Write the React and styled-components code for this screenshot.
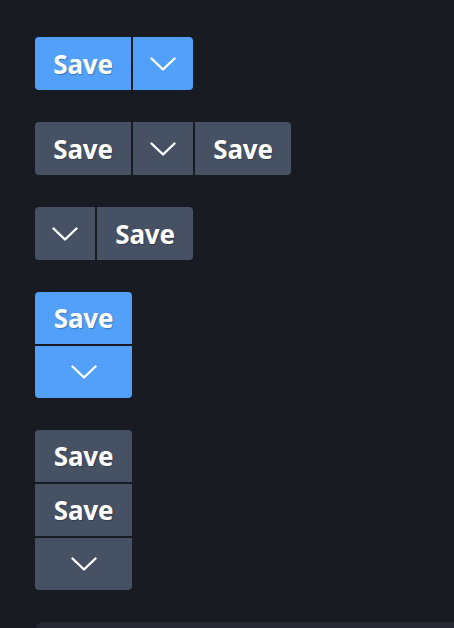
import React from "react";
import styled, { createGlobalStyle } from "styled-components";

const GlobalStyle = createGlobalStyle`
  html, body {
    margin: 0;
    padding: 0;
    background: #191b22;
    overflow: hidden;
  }
`;

const Page = styled.div`
  display: flex;
  flex-direction: column;
  align-items: flex-start;
  gap: 32px;
  padding: 37px 0 0 35px;
  height: 628px;
  box-sizing: border-box;
  overflow: hidden;
  font-family: "Noto Sans", "Open Sans", sans-serif;
`;

const Group = styled.div`
  display: inline-flex;
  flex-shrink: 0;
  flex-direction: ${(p) => (p.$vertical ? "column" : "row")};
  gap: 2px;
  border-radius: 4px;
  overflow: hidden;
`;

const Button = styled.button`
  display: flex;
  flex-shrink: 0;
  align-items: center;
  justify-content: center;
  box-sizing: border-box;
  height: ${(p) => (p.$vertical ? "52px" : "53px")};
  width: ${(p) => (p.$vertical ? "97px" : "auto")};
  padding: 0 ${(p) => (p.$icon ? "17px" : "18px")};
  min-width: ${(p) => (p.$icon ? "60px" : "96px")};
  border: none;
  border-radius: 0;
  font-family: inherit;
  font-size: 26px;
  font-weight: 700;
  letter-spacing: -0.2px;
  color: #fff;
  text-shadow: 1px 1px 1px rgba(0, 0, 0, 0.25);
  cursor: pointer;
  background: ${(p) => (p.$primary ? "#52a0f9" : "#475164")};
`;

const Panel = styled.div`
  flex-shrink: 0;
  width: 440px;
  height: 60px;
  margin-left: 1px;
  border-radius: 8px;
  background: #272a35;
`;

const Chevron = () => (
  <svg width="26" height="14" viewBox="0 0 26 14" fill="none">
    <path
      d="M1.5 1.5 L13 12.5 L24.5 1.5"
      stroke="#fff"
      strokeWidth="2.4"
      strokeLinecap="round"
      strokeLinejoin="round"
    />
  </svg>
);

const App = () => (
  <>
    <GlobalStyle />
    <Page>
      <Group>
        <Button $primary>Save</Button>
        <Button $primary $icon>
          <Chevron />
        </Button>
      </Group>

      <Group>
        <Button>Save</Button>
        <Button $icon>
          <Chevron />
        </Button>
        <Button>Save</Button>
      </Group>

      <Group>
        <Button $icon>
          <Chevron />
        </Button>
        <Button>Save</Button>
      </Group>

      <Group $vertical>
        <Button $primary $vertical>Save</Button>
        <Button $primary $vertical $icon>
          <Chevron />
        </Button>
      </Group>

      <Group $vertical>
        <Button $vertical>Save</Button>
        <Button $vertical>Save</Button>
        <Button $vertical $icon>
          <Chevron />
        </Button>
      </Group>

      <Panel />
    </Page>
  </>
);

export default App;
